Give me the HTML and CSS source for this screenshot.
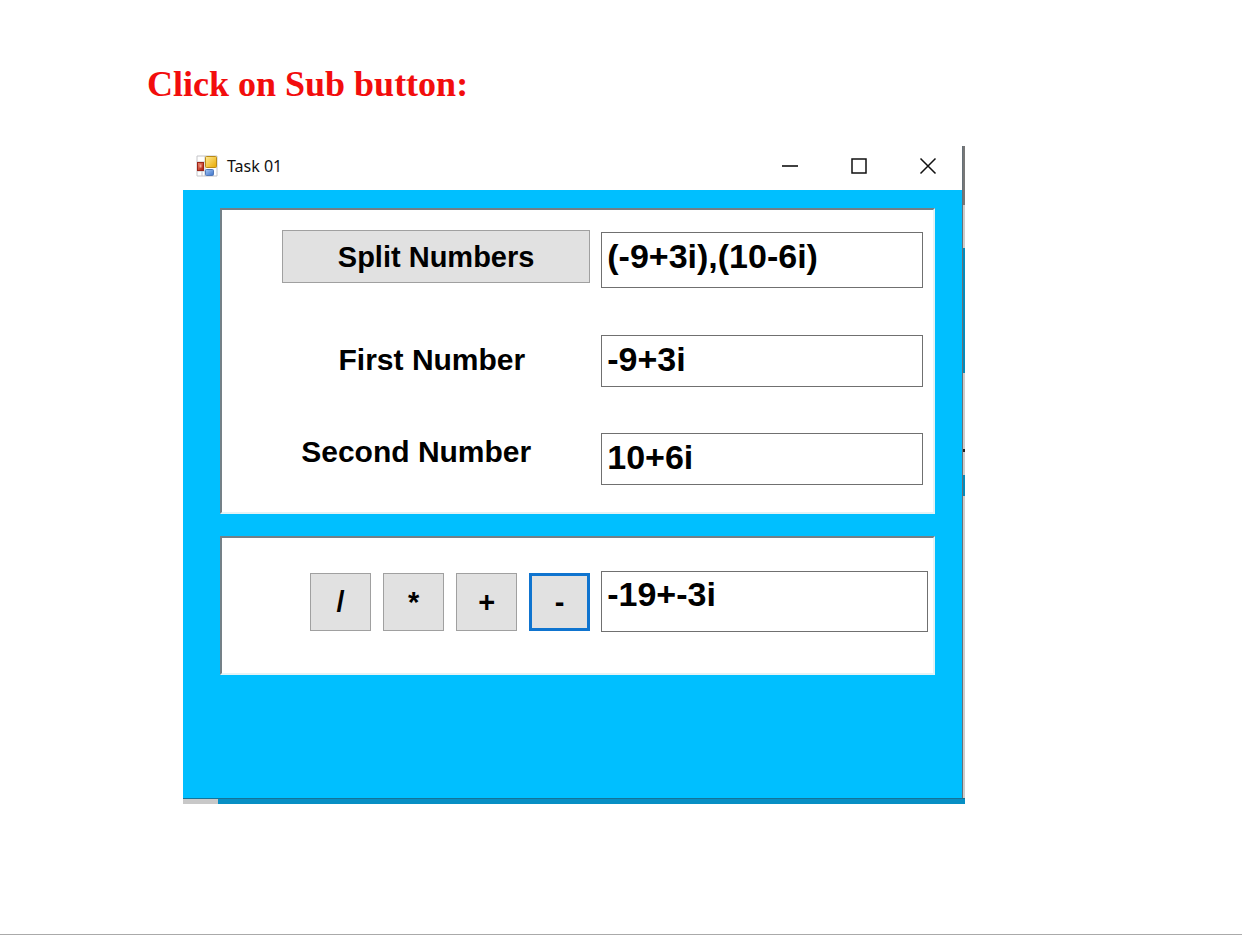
FILE: index.html
```html
<!DOCTYPE html>
<html lang="en">
<head>
<meta charset="utf-8">
<title>Task 01</title>
<link rel="stylesheet" href="styles.css">
</head>
<body class="page">
<h1 class="heading">Click on Sub button:</h1>
<main class="window">
  <header class="titlebar">
    <svg class="app-icon" width="22" height="22" viewBox="0 0 22 22" aria-hidden="true">
      <defs>
        <linearGradient id="gold" x1="0" y1="0" x2="1" y2="1"><stop offset="0" stop-color="#ffeb96"/><stop offset="1" stop-color="#e8a800"/></linearGradient>
        <linearGradient id="red" x1="0" y1="0" x2="1" y2="1"><stop offset="0" stop-color="#ee8a70"/><stop offset="1" stop-color="#a81408"/></linearGradient>
        <linearGradient id="blue" x1="0" y1="0" x2="1" y2="1"><stop offset="0" stop-color="#a4c8f4"/><stop offset="1" stop-color="#3a70c8"/></linearGradient>
      </defs>
      <path d="M1 1h20v20H1z" fill="#fff" stroke="#c4c4c8"/>
      <path d="M1 7h8M1 16h8M6 16v5M9 1v20" stroke="#c4c4c8"/>
      <rect x="9.500" y="1.500" width="11" height="11" rx="1" fill="url(#gold)" stroke="#b98a18"/>
      <rect x="1.500" y="7.500" width="6" height="8" fill="url(#red)" stroke="#9c2418"/>
      <rect x="3.500" y="9.500" width="2" height="3" fill="#f3a390"/>
      <rect x="9.500" y="14.500" width="8" height="6" rx="1" fill="url(#blue)" stroke="#5078b8"/>
    </svg>
    <span class="title">Task 01</span>
    <button class="caption" type="button" aria-label="Minimize"><svg width="18" height="18" viewBox="0 0 18 18"><path d="M1 9h16" stroke="#111" stroke-width="1.600"/></svg></button>
    <button class="caption" type="button" aria-label="Maximize"><svg width="18" height="18" viewBox="0 0 18 18"><path d="M2 2h14v14H2z" fill="none" stroke="#111" stroke-width="1.500"/></svg></button>
    <button class="caption" type="button" aria-label="Close"><svg width="18" height="18" viewBox="0 0 18 18"><path d="M1.500 1.500l15 15M16.500 1.500L1.500 16.500" stroke="#111" stroke-width="1.500"/></svg></button>
  </header>
  <form class="client">
    <section class="panel numbers">
      <button class="btn split" type="button">Split Numbers</button>
      <input class="field" type="text" aria-label="Numbers" value="(-9+3i),(10-6i)">
      <label class="label label-first" for="first">First Number</label>
      <input class="field" type="text" id="first" value="-9+3i">
      <label class="label label-second" for="second">Second Number</label>
      <input class="field" type="text" id="second" value="10+6i">
    </section>
    <section class="panel operations">
      <div class="operators">
        <button class="btn op" type="button">/</button>
        <button class="btn op" type="button">*</button>
        <button class="btn op" type="button">+</button>
        <button class="btn op active" type="button">-</button>
      </div>
      <input class="field result" type="text" aria-label="Result" value="-19+-3i">
    </section>
  </form>
  <div class="edge"></div>
  <div class="foot"></div>
</main>
</body>
</html>
```
FILE: styles.css
```css
* { box-sizing: border-box; }

.page {
  margin: 0;
  min-height: 100vh;
  padding: 60px 0 60px 147px;
  background: #fff;
  border-bottom: 1px solid #aaa;
  font-family: "Liberation Sans", Arial, sans-serif;
}

.heading {
  margin: 0 0 38px;
  color: #f20d0d;
  font: bold 36px/48px "Liberation Serif", "Times New Roman", serif;
}

.window {
  width: 63vw;
  min-width: 700px;
  margin-left: 36px;
  display: grid;
  grid-template-columns: 1fr 3px;
}

.titlebar {
  grid-column: 1;
  display: flex;
  align-items: center;
  height: 44px;
  padding: 0 0 4px 13px;
}

.title {
  flex: 1;
  margin-left: 9px;
  color: #111;
  font: 16px/24px "Noto Sans", sans-serif;
}

.caption {
  display: grid;
  place-items: center;
  width: 69px;
  height: 40px;
  padding: 0;
  border: 0;
  background: none;
}

.client {
  grid-column: 1;
  min-height: 608px;
  padding: 18px 27px 60px 37px;
  background: #00bfff;
}

.panel {
  display: grid;
  column-gap: 11px;
  border: 2px solid;
  border-color: #748087 #e4f3f6 #e4f3f6 #748087;
  background: #fff;
}

.numbers {
  grid-template-columns: 309fr 323fr;
  grid-template-rows: 58px 51px 52px;
  row-gap: 47px;
  padding: 20px 10px 27px 60px;
}

.operations {
  grid-template-columns: 280fr 327fr;
  margin-top: 22px;
  padding: 33px 5px 41px 88px;
}

.operators {
  display: grid;
  grid-template-columns: repeat(4, 1fr);
  gap: 12px;
  padding-top: 2px;
}

.btn {
  padding: 0;
  border: 1px solid #a0a0a0;
  background: #e1e1e1;
  color: #000;
  font: bold 29px/32px "Liberation Sans", Arial, sans-serif;
}

.split { height: 53px; }
.op { height: 58px; }
.active { border: 3px solid #0f74cf; }

.field {
  width: 100%;
  min-width: 0;
  height: 52px;
  padding: 0 4px 4px 5px;
  border: 1px solid #707070;
  background: #fff;
  color: #000;
  font: bold 34px/40px "Liberation Sans", Arial, sans-serif;
}

.split + .field {
  height: 56px;
  margin-top: 2px;
  padding-bottom: 8px;
}

.result {
  height: 61px;
  padding-bottom: 14px;
}

.label {
  color: #000;
  font: bold 30px/50px "Liberation Sans", Arial, sans-serif;
  text-align: right;
}

.label-first { padding-right: 65px; }
.label-second { padding-right: 59px; line-height: 38px; }

.edge {
  grid-column: 2;
  grid-row: 1 / 3;
  border-left: 1px solid #667078;
  background: linear-gradient(#777 59px, #ccc 59px 102px, #078ab9 102px 227px, #ccc 227px 303px, #222 303px 306px, #ccc 306px 329px, #078ab9 329px 350px, #ccc 350px);
}

.foot {
  grid-column: 1 / 3;
  height: 6px;
  border-top: 1px solid #147398;
  background: linear-gradient(to right, #c8c8c8 35px, #078fc4 35px);
}
```
